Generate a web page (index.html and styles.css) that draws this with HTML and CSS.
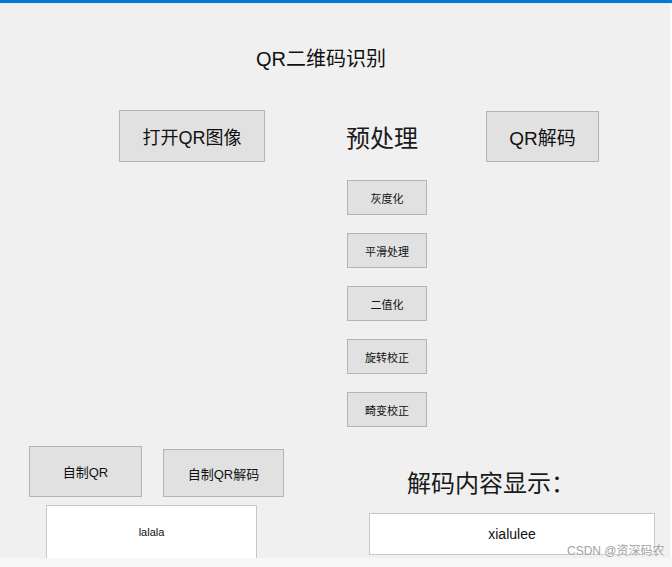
FILE: index.html
```html
<!DOCTYPE html>
<html lang="zh-CN">
<head>
<meta charset="utf-8">
<title>QR二维码识别</title>
<link rel="stylesheet" href="styles.css">
</head>
<body>
<div class="topbar"></div>
<main class="form">
  <h1 class="title">QR二维码识别</h1>
  <div class="row-top">
    <button class="btn btn-open">打开QR图像</button>
    <div class="label-pre">预处理</div>
    <button class="btn btn-decode">QR解码</button>
  </div>
  <div class="tools">
    <button class="btn btn-tool">灰度化</button>
    <button class="btn btn-tool">平滑处理</button>
    <button class="btn btn-tool">二值化</button>
    <button class="btn btn-tool">旋转校正</button>
    <button class="btn btn-tool">畸变校正</button>
  </div>
  <div class="bottom">
    <div class="left-col">
      <div class="make-row">
        <button class="btn btn-make">自制QR</button>
        <button class="btn btn-make-decode">自制QR解码</button>
      </div>
      <div class="outbox box-lalala">lalala</div>
    </div>
    <div class="right-col">
      <div class="label-result">解码内容显示：</div>
      <div class="outbox box-result">xialulee</div>
    </div>
  </div>
</main>
<div class="strip"></div>
<span class="watermark">CSDN @资深码农</span>
</body>
</html>
```

FILE: styles.css
```css
html, body {
  margin: 0;
  padding: 0;
}
body {
  width: 672px;
  height: 567px;
  overflow: hidden;
  background: #f0f0f0;
  font-family: "Liberation Sans", "Noto Sans CJK SC", sans-serif;
  color: #111;
  position: relative;
}
.topbar {
  height: 3px;
  background: #0a78d2;
  border-bottom: 1px solid #d6f0fb;
}
.form {
  height: 554px;
  overflow: hidden;
  border-right: 2px solid #f7fdff;
  box-sizing: border-box;
}
.title {
  margin: 45px 0 0 0;
  font-size: 20px;
  line-height: 20px;
  font-weight: normal;
  text-align: center;
  padding-right: 28px;
  color: #111;
}
.btn {
  font-family: "Liberation Sans", "Noto Sans CJK SC", sans-serif;
  background: #e1e1e1;
  border: 1px solid #b4b4b4;
  color: #111;
  padding: 0;
  margin: 0;
  box-sizing: border-box;
  display: flex;
  align-items: center;
  justify-content: center;
}
.row-top {
  display: flex;
  align-items: flex-start;
  margin-top: 41px;
  height: 52px;
}
.btn-open {
  margin-left: 119px;
  width: 146px;
  height: 52px;
  font-size: 18px;
}
.label-pre {
  margin-left: 81px;
  margin-top: 16px;
  font-family: "Liberation Serif", "Noto Sans CJK SC", serif;
  font-size: 24px;
  line-height: 26px;
  color: #1a1a1a;
}
.btn-decode {
  margin-left: 68px;
  margin-top: 1px;
  width: 113px;
  height: 51px;
  font-size: 19px;
}
.tools {
  display: flex;
  flex-direction: column;
  gap: 18px;
  margin-top: 18px;
  padding-left: 347px;
}
.btn-tool {
  width: 80px;
  height: 35px;
  font-size: 11px;
}
.bottom {
  display: flex;
  margin-top: 19px;
}
.left-col {
  width: 284px;
  display: flex;
  flex-direction: column;
}
.make-row {
  display: flex;
  align-items: flex-start;
  height: 51px;
}
.btn-make {
  margin-left: 29px;
  width: 113px;
  height: 51px;
  font-size: 13px;
}
.btn-make-decode {
  margin-left: 21px;
  margin-top: 3px;
  width: 121px;
  height: 48px;
  font-size: 13px;
}
.outbox {
  background: #fff;
  border: 1px solid #c8c8c8;
  box-sizing: border-box;
  display: flex;
  align-items: center;
  justify-content: center;
  color: #111;
}
.box-lalala {
  margin-top: 8px;
  margin-left: 46px;
  width: 211px;
  height: 54px;
  font-size: 11px;
}
.right-col {
  margin-left: 85px;
  display: flex;
  flex-direction: column;
}
.label-result {
  margin-left: 38px;
  margin-top: 25px;
  font-family: "Liberation Serif", "Noto Sans CJK SC", serif;
  font-size: 24px;
  line-height: 26px;
  color: #1a1a1a;
}
.box-result {
  margin-top: 16px;
  width: 286px;
  height: 42px;
  font-size: 14px;
}
.strip {
  height: 9px;
  background: #f6f6f6;
}
.watermark {
  position: absolute;
  left: 567px;
  top: 545px;
  font-size: 12px;
  line-height: 13px;
  color: #a0a0a0;
  text-shadow: 0 0 2px #fff, 0 0 1px #fff;
  font-family: "Liberation Sans", "Noto Sans CJK SC", sans-serif;
}
```
